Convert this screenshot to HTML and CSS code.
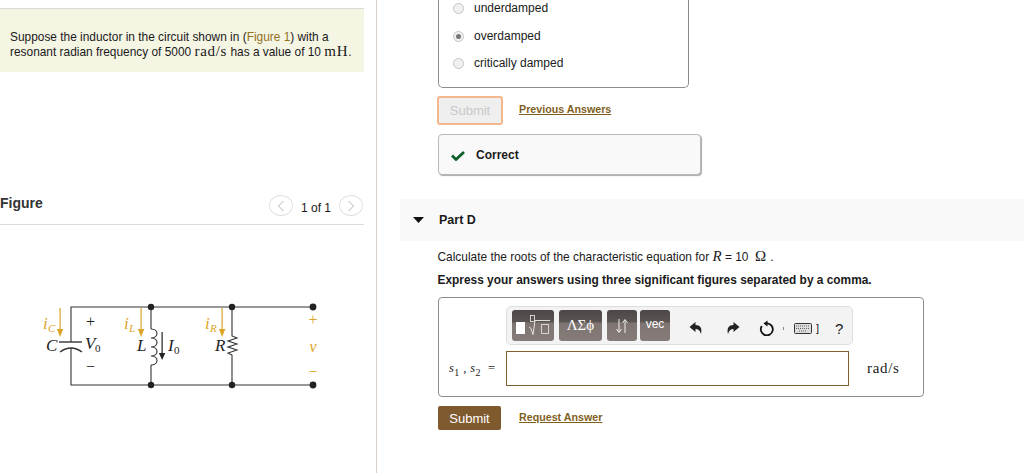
FILE: index.html
```html
<!DOCTYPE html>
<html lang="en">
<head>
<meta charset="utf-8">
<title>Part D</title>
<link rel="stylesheet" href="styles.css">
</head>
<body>
<div class="page">
  <aside class="left">
    <div class="intro">
      <p>Suppose the inductor in the circuit shown in (<a class="figlink">Figure 1</a>) with a<br>resonant radian frequency of 5000 <span class="math">rad/s</span> has a value of 10 <span class="math">mH</span>.</p>
    </div>
    <div class="fighead">
      <h2>Figure</h2>
      <div class="pager">
        <span class="circle"><svg width="8" height="12" viewBox="0 0 8 12"><path d="M6.500 1 1.500 6l5 5" fill="none" stroke="#b5b5b5" stroke-width="1"/></svg></span>
        <span class="count">1 of 1</span>
        <span class="circle"><svg width="8" height="12" viewBox="0 0 8 12"><path d="M1.500 1l5 5-5 5" fill="none" stroke="#b5b5b5" stroke-width="1"/></svg></span>
      </div>
    </div>
    <svg class="circuit" width="300" height="110" viewBox="0 0 300 110">
      <g fill="none" stroke="#333" stroke-width="1.100">
        <path d="M283 13H41V48M41 54V91H283"/>
        <path d="M121 13V35M121 71V91"/>
        <path d="M121 35c8 0 8 9 0 9c8 0 8 9 0 9c8 0 8 9 0 9c8 0 8 9 0 9"/>
        <path d="M202 13V42l5 2-9 3 9 3-9 3 9 3-9 3 4 2V91"/>
        <path d="M29 48H52" stroke-width="1.400"/>
        <path d="M30 58Q41 50 52 58" stroke-width="1.400"/>
      </g>
      <g fill="#222">
        <circle cx="121" cy="13" r="3.200"/><circle cx="202" cy="13" r="3.200"/><circle cx="283" cy="13" r="3.400"/>
        <circle cx="121" cy="91" r="3.200"/><circle cx="202" cy="91" r="3.200"/><circle cx="283" cy="91" r="3.400"/>
        <path d="M131.500 38h1.200V59h2.600l-3.200 7-3.200-7h2.600z"/>
      </g>
      <g fill="#dca428">
        <path d="M29.500 14h1.200V35h2.600l-3.200 8-3.200-8h2.600z"/>
        <path d="M110.500 14h1.200V35h2.600l-3.200 8-3.200-8h2.600z"/>
        <path d="M191.500 14h1.200V35h2.600l-3.200 8-3.200-8h2.600z"/>
      </g>
      <g class="cv">
        <text x="16" y="57" class="big">C</text>
        <text x="55" y="55" class="big">V</text><text x="65" y="58" class="sub up">0</text>
        <text x="60.500" y="33" class="up mid">+</text>
        <text x="60.500" y="78" class="up mid">−</text>
        <text x="107" y="57" class="big">L</text>
        <text x="138" y="57" class="big">I</text><text x="144" y="60" class="sub up">0</text>
        <text x="185" y="57" class="big">R</text>
      </g>
      <g class="cy">
        <text x="13" y="35" class="big">i</text><text x="18" y="38" class="sub">C</text>
        <text x="94" y="35" class="big">i</text><text x="99" y="38" class="sub">L</text>
        <text x="175" y="35" class="big">i</text><text x="180" y="38" class="sub">R</text>
        <text x="283" y="31" class="up mid">+</text>
        <text x="283" y="58" class="mid">v</text>
        <text x="283" y="83" class="up mid">−</text>
      </g>
    </svg>
  </aside>

  <main class="right">
    <div class="choices">
      <label class="choice"><span class="radio"></span>underdamped</label>
      <label class="choice"><span class="radio on"></span>overdamped</label>
      <label class="choice"><span class="radio"></span>critically damped</label>
    </div>
    <div class="actions first">
      <button class="btn disabled">Submit</button>
      <a class="link">Previous Answers</a>
    </div>
    <div class="correct">
      <svg width="14" height="11" viewBox="0 0 14 11"><path d="M1 5.500 5 9.500 13 2" fill="none" stroke="#0f5f2b" stroke-width="2.800"/></svg>
      <b>Correct</b>
    </div>
    <div class="part">
      <svg width="11" height="6" viewBox="0 0 11 6"><path d="M0 0h11L5.500 6z" fill="#111"/></svg>
      <b>Part D</b>
    </div>
    <p class="q">Calculate the roots of the characteristic equation for <i class="mathi">R</i> = 10 &nbsp;<span class="math">Ω</span> .</p>
    <p class="q strong">Express your answers using three significant figures separated by a comma.</p>
    <div class="answer">
      <div class="toolbar">
        <span class="tool t1">
          <svg width="34" height="22" viewBox="0 0 34 22"><rect x="0" y="7" width="9" height="12" fill="#fff"/><rect x="14.500" y=".5" width="4" height="6" fill="none" stroke="#eee" stroke-width=".8"/><path d="M13 12l2 1.500 2 6 2-14h15" fill="none" stroke="#eee" stroke-width=".9"/><rect x="25.500" y="9.500" width="7" height="9" fill="none" stroke="#ddd" stroke-width=".9"/></svg>
        </span>
        <span class="tool t2">ΛΣϕ</span>
        <span class="tool t3">
          <svg width="14" height="16" viewBox="0 0 14 16"><path d="M4 1v13M1.500 11 4 14.500 6.500 11M10 15V2M7.500 5 10 1.500 12.500 5" fill="none" stroke="#eee" stroke-width="1"/></svg>
        </span>
        <span class="tool t4">vec</span>
        <span class="icons">
          <svg class="i-undo" width="15" height="14" viewBox="0 0 15 14"><path d="M6.500 1 .5 6l6 5V8c3 0 4.500 1.500 5.500 5 1.500-6-1-9-5.500-9z" fill="#222"/></svg>
          <svg class="i-redo" width="15" height="14" viewBox="0 0 15 14"><path d="M8.500 1l6 5-6 5V8c-3 0-4.500 1.500-5.500 5-1.500-6 1-9 5.500-9z" fill="#222"/></svg>
          <svg class="i-reset" width="16" height="16" viewBox="0 0 16 16"><path d="M9 3.300A6 6 0 1 1 3.800 6" fill="none" stroke="#111" stroke-width="1.800"/><path d="M5.500 3.500 9.500.5v6z" fill="#111"/></svg>
          <span class="tick"></span>
          <svg class="i-kbd" width="18" height="11" viewBox="0 0 18 11"><rect x=".5" y=".5" width="17" height="10" rx="1" fill="#ddd" stroke="#333"/><path d="M2 3h14M2 5.500h14M5 8h8" stroke="#666" stroke-dasharray="1 1"/></svg>
          <span class="brk">]</span>
          <span class="help">?</span>
        </span>
      </div>
      <div class="inputrow">
        <span class="label"><i>s</i><sub>1</sub> , <i>s</i><sub>2</sub> &nbsp;=</span>
        <span class="field"></span>
        <span class="unit">rad/s</span>
      </div>
    </div>
    <div class="actions last">
      <button class="btn">Submit</button>
      <a class="link">Request Answer</a>
    </div>
  </main>
</div>
</body>
</html>
```
FILE: styles.css
```css
* { box-sizing: border-box; }
html, body { margin: 0; height: 100%; overflow: hidden; background: #fff; }
body { font: 12px/15px "Liberation Sans", Arial, sans-serif; color: #1a1a1a; }
p { margin: 0; }

.page { display: flex; height: 473px; }

.left { width: 377px; height: 473px; padding: 8px 12px 0 0; border-right: 1px solid #d9d2cc; flex: none; }
.intro { height: 64px; padding: 21px 0 0 10px; background: #f5f5e4; border-top: 1px solid #d9d9d9; font-size: 11.900px; }
.figlink { color: #94701f; }
.math { font-family: "Liberation Serif", serif; font-size: 15px; letter-spacing: .7px; line-height: 0; }

.fighead { display: flex; justify-content: space-between; align-items: center; height: 32px; margin-top: 121px; padding-right: 1px; border-bottom: 1px solid #dcdcdc; padding-bottom: 6px; }
.fighead h2 { margin: 0 0 6px; font-size: 14px; line-height: 16px; font-weight: 700; color: #333; }
.pager { display: flex; align-items: center; }
.count { margin: 5px 8px 0; }
.circle { display: flex; align-items: center; justify-content: center; width: 24px; height: 21px; border: 1px solid #e2e2e2; border-radius: 50%; }

.circuit { display: block; margin: 69px 0 0 30px; }
.circuit text { font-family: "Liberation Serif", serif; font-style: italic; }
.circuit .big { font-size: 17px; }
.circuit .mid { font-size: 16px; text-anchor: middle; }
.circuit .sub { font-size: 11px; }
.circuit .up { font-style: normal; }
.cv { fill: #222; }
.cy { fill: #dca428; }

.right { flex: 1; min-width: 0; padding: 0 0 0 23px; }
.choices { width: 251px; height: 95px; margin: -7px 0 0 38px; padding-top: 2px; border: 1px solid #8c8c8c; border-top: 0; border-radius: 0 0 5px 5px; }
.choice { display: flex; align-items: center; height: 27.500px; padding-left: 14px; }
.radio { width: 11px; height: 11px; margin-right: 10px; border: 1px solid #c4c4c4; border-radius: 50%; background: #f1f1f1; flex: none; position: relative; }
.radio.on::after { content: ""; position: absolute; inset: 2px; border-radius: 50%; background: #777; }

.actions { display: flex; align-items: center; gap: 18px; }
.actions.first { margin: 8px 0 0 37px; gap: 16px; }
.actions.last { margin: 9px 0 0 38px; }
.btn { width: 63px; height: 24px; padding: 0; border: 0; border-radius: 2px; background: #7f5a2e; color: #fff; font: 13px "Liberation Sans", Arial, sans-serif; }
.btn.disabled { width: 66px; height: 29px; background: #efefef; color: #c8c8c8; border: 2px solid #f6b68e; border-radius: 3px; }
.link { font-size: 10.700px; font-weight: 700; color: #7f5f1e; text-decoration: underline; margin-top: -2px; }

.correct { display: flex; align-items: center; gap: 11px; width: 263px; height: 41px; margin: 9px 0 0 38px; padding: 1px 0 0 12px; background: #f9f9f9; border: 1px solid #b8b8b8; border-radius: 4px; box-shadow: 1px 1px 1px #aaa; }
.part { display: flex; align-items: center; gap: 15px; height: 42px; margin-top: 24px; padding-left: 13px; background: #f9f9f9; font-size: 12.500px; }
.q { margin-left: 37.500px; font-size: 11.900px; }
.part + .q { margin-top: 9px; }
.q.strong { margin-top: 8px; font-weight: 700; font-size: 11.900px; }
.mathi { font-family: "Liberation Serif", serif; font-size: 15px; line-height: 0; }

.answer { width: 486px; height: 100px; margin: 9px 0 0 38px; border: 1px solid #8c8c8c; border-radius: 4px; padding: 8px 0 0 67px; }
.toolbar { display: flex; align-items: center; width: 347px; height: 39px; padding-left: 5px; background: #f3f3f3; border: 1px solid #dedede; border-radius: 5px; }
.tool { display: flex; align-items: center; justify-content: center; height: 31px; border-radius: 3px; color: #fff; font-size: 12px; background: linear-gradient(#4c4644 0, #5a5452 38%, #7e7472 42%, #857b79 100%); }
.t1 { width: 42px; }
.t2 { width: 43px; margin-left: 5px; font-family: "Liberation Serif", serif; font-size: 15px; }
.t3 { width: 30px; margin-left: 5px; }
.t4 { width: 30px; margin-left: 3px; padding-bottom: 3px; }
.icons { display: flex; align-items: center; margin: 5px 0 0 19px; }
.i-redo { margin-left: 21px; }
.i-reset { margin-left: 18px; }
.tick { width: 1px; height: 3px; margin-left: 9px; background: #888; }
.i-kbd { margin-left: 10px; }
.brk { margin-left: 4px; font-size: 11px; }
.help { margin-left: 16px; font-size: 15px; }

.inputrow { display: flex; align-items: center; margin: 6px 0 0 -57px; font-family: "Liberation Serif", serif; }
.label { width: 57px; font-size: 12.500px; letter-spacing: .4px; white-space: nowrap; }
.label sub { font-size: 10px; line-height: 0; }
.field { width: 343px; height: 35px; background: #fff; border: 1px solid #7f5f2e; }
.unit { margin-left: 18px; font-size: 15px; letter-spacing: .7px; }
```
